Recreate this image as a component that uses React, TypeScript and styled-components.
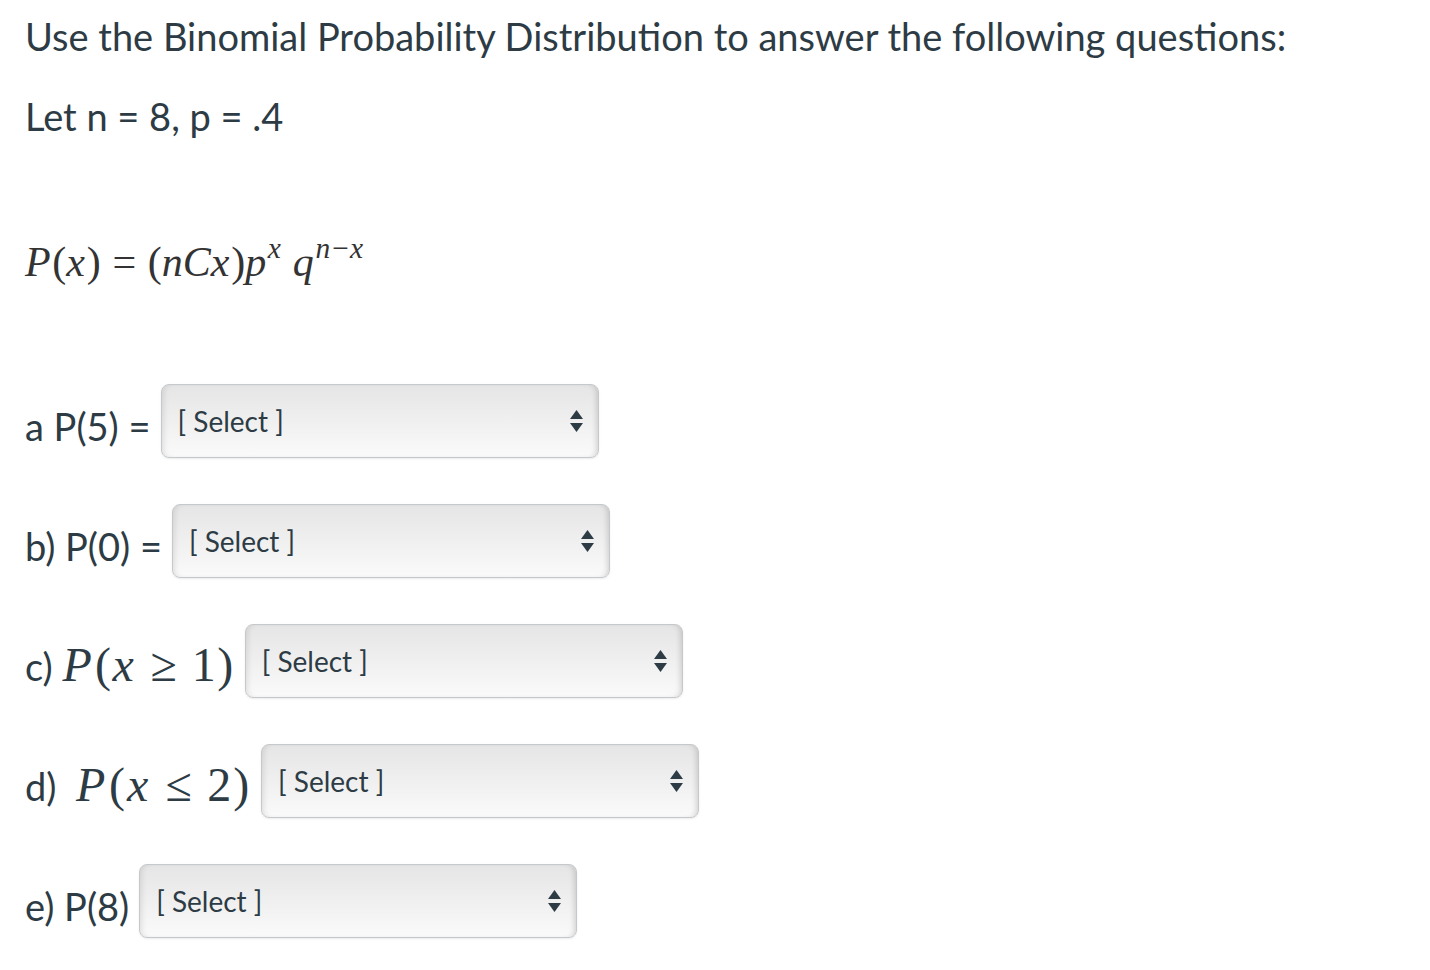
import styled, { createGlobalStyle } from "styled-components";

const GlobalStyle = createGlobalStyle`
  body {
    margin: 0;
    background: #fff;
  }
`;

const Page = styled.main`
  padding: 9px 25px;
  color: #2d3b45;
  font-family: Lato, "Liberation Sans", sans-serif;
  font-size: 38px;
  line-height: 54px;
`;

const Para = styled.p`
  margin: 0 0 26px;
`;

const FormulaBlock = styled.div`
  margin: 89px 0 92px;
  height: 60px;
  display: flex;
  align-items: center;
  color: #333;
`;

const Math = styled.span<{ size: number; spacing?: number }>`
  font-family: "Liberation Serif", "DejaVu Serif", serif;
  font-size: ${(p) => p.size}px;
  line-height: 1;
  letter-spacing: ${(p) => p.spacing ?? 0}em;
  white-space: nowrap;
`;

const V = styled.i`
  font-style: italic;
  padding-right: 0.04em;
`;

const Op = styled.span`
  margin: 0 0.28em;
`;

const Sup = styled.sup`
  font-size: 0.7em;
  font-style: italic;
  vertical-align: 0.6em;
  line-height: 0;
  margin-right: 0.05em;
`;

const Row = styled.div`
  display: flex;
  align-items: center;
  gap: 10px;
  height: 74px;
  margin-bottom: 46px;
`;

const Label = styled.span`
  padding-top: 10px;
  white-space: nowrap;
`;

const SelectBox = styled.div`
  box-sizing: border-box;
  width: 438px;
  height: 74px;
  display: flex;
  align-items: center;
  justify-content: space-between;
  padding: 0 15px 0 16px;
  border: 1px solid #c6c9cc;
  border-radius: 8px;
  background: linear-gradient(#e5e5e5, #fafafa);
  box-shadow: inset -5px 0 6px -4px rgba(0, 0, 0, 0.18),
    inset 5px 0 6px -4px rgba(0, 0, 0, 0.12), 0 1px 2px rgba(0, 0, 0, 0.08);
  font-size: 28px;
  color: #2d3b45;
  cursor: pointer;
`;

const Arrows = () => (
  <svg width="13" height="22" viewBox="0 0 13 22">
    <polygon points="6.5,0 13,9 0,9" fill="#2d3b45" />
    <polygon points="0,13 13,13 6.5,22" fill="#2d3b45" />
  </svg>
);

function Select() {
  return (
    <SelectBox>
      <span>[ Select ]</span>
      <Arrows />
    </SelectBox>
  );
}

export default function App() {
  return (
    <>
      <GlobalStyle />
      <Page>
        <Para>Use the Binomial Probability Distribution to answer the following questions:</Para>
        <Para>Let n = 8, p = .4</Para>
        <FormulaBlock>
          <Math size={42}>
            <V>P</V>(<V>x</V>)<Op>=</Op>(<V>nCx</V>)<V>p</V>
            <Sup>x</Sup>
            <V> q</V>
            <Sup>n−x</Sup>
          </Math>
        </FormulaBlock>
        <Row>
          <Label>a P(5) =</Label>
          <Select />
        </Row>
        <Row>
          <Label>b) P(0) =</Label>
          <Select />
        </Row>
        <Row>
          <Label>
            c){" "}
            <Math size={48} spacing={0.03}>
              <V>P</V>(<V>x</V>
              <Op>≥</Op>1)
            </Math>
          </Label>
          <Select />
        </Row>
        <Row>
          <Label>
            d)&nbsp;{" "}
            <Math size={48} spacing={0.04}>
              <V>P</V>(<V>x</V>
              <Op>≤</Op>2)
            </Math>
          </Label>
          <Select />
        </Row>
        <Row>
          <Label>e) P(8)</Label>
          <Select />
        </Row>
      </Page>
    </>
  );
}
